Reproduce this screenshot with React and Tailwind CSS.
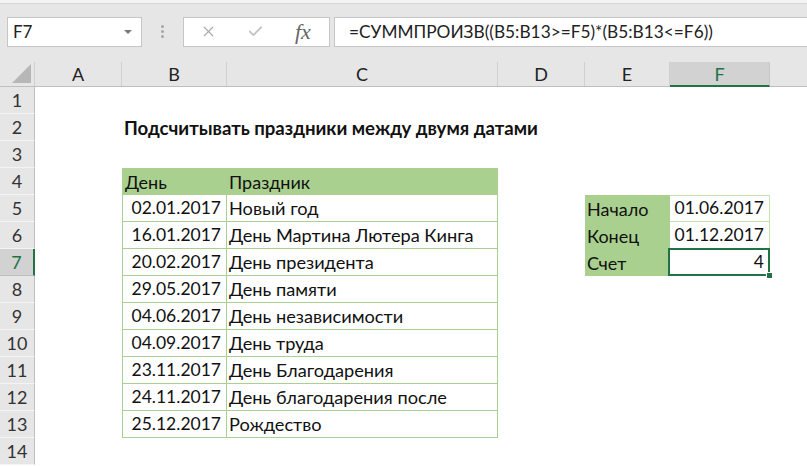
import { X, Check } from 'lucide-react';

const cols = [
  { key: 'A', w: 'w-[87px]' },
  { key: 'B', w: 'w-[105px]' },
  { key: 'C', w: 'w-[271px]' },
  { key: 'D', w: 'w-[87px]' },
  { key: 'E', w: 'w-[85px]' },
  { key: 'F', w: 'w-[100px]' },
  { key: 'G', w: 'flex-1' },
];

const holidays = [
  ['02.01.2017', 'Новый год'],
  ['16.01.2017', 'День Мартина Лютера Кинга'],
  ['20.02.2017', 'День президента'],
  ['29.05.2017', 'День памяти'],
  ['04.06.2017', 'День независимости'],
  ['04.09.2017', 'День труда'],
  ['23.11.2017', 'День Благодарения'],
  ['24.11.2017', 'День благодарения после'],
  ['25.12.2017', 'Рождество'],
];

const summary = {
  5: ['Начало', '01.06.2017'],
  6: ['Конец', '01.12.2017'],
  7: ['Счет', '4'],
};

function cellFor(row, col) {
  // returns { text, cls, align, selected }
  if (row === 2 && col === 'B') return { text: 'Подсчитывать праздники между двумя датами', cls: 'font-bold text-[18.6px]', align: 'left' };
  if (row === 4 && col === 'B') return { text: 'День', cls: 'text-[18px] bg-[#a9d08e] border-t border-l border-[#a9d08e]', align: 'left' };
  if (row === 4 && col === 'C') return { text: 'Праздник', cls: 'text-[18px] bg-[#a9d08e] border-t border-r border-[#a9d08e]', align: 'left' };
  if (row >= 5 && row <= 13) {
    const h = holidays[row - 5];
    if (col === 'B') return { text: h[0], cls: 'text-[17.5px] border-l border-r border-b border-[#a9d08e]', align: 'right' };
    if (col === 'C') return { text: h[1], cls: 'text-[18.2px] border-r border-b border-[#a9d08e]', align: 'left' };
  }
  if (summary[row]) {
    const s = summary[row];
    if (col === 'E') return { text: s[0], cls: 'text-[18px] bg-[#a9d08e]', align: 'left' };
    if (col === 'F')
      return {
        text: s[1],
        cls: 'text-[17.5px] ' + (row === 5 ? 'border-t ' : '') + 'border-r border-b border-[#c6e0b4]',
        align: 'right',
        selected: row === 7,
      };
  }
  return { text: '', cls: 'text-[17.5px]', align: 'left' };
}

function FormulaBar() {
  return (
    <div className="bg-[#e6e6e6]">
      <div className="h-[4px] bg-[#f3f3f3] border-b border-[#d6d6d6]" />
      <div className="flex items-center h-[58px] pb-[3px]">
        <div className="ml-[7px] w-[135px] h-[30px] bg-white border border-[#c6c6c6] flex items-center justify-between pl-[5px] pr-[9px]">
          <span className="text-[17px] text-[#222]">F7</span>
          <span className="w-0 h-0 border-l-[4px] border-r-[4px] border-t-[4px] border-l-transparent border-r-transparent border-t-[#777]" />
        </div>
        <div className="w-[41px] flex flex-col items-center gap-[2px]">
          <span className="w-[3px] h-[3px] rounded-full bg-[#a6a6a6]" />
          <span className="w-[3px] h-[3px] rounded-full bg-[#a6a6a6]" />
          <span className="w-[3px] h-[3px] rounded-full bg-[#a6a6a6]" />
        </div>
        <div className="w-[147px] h-[30px] bg-white border border-[#c6c6c6] flex items-center">
          <X size={17} strokeWidth={1.5} className="ml-[16px] text-[#a8a8a8]" />
          <Check size={17} strokeWidth={2.5} className="ml-[30px] text-[#c4c4c4]" />
          <span className="ml-[31px] text-[22px] italic text-[#666] font-['Liberation_Serif',serif] leading-none">fx</span>
        </div>
        <div className="ml-[4px] flex-1 h-[30px] bg-white border border-r-0 border-[#c6c6c6] flex items-center pl-[14px]">
          <span className="text-[17.3px] text-[#222]">=СУММПРОИЗВ((B5:B13&gt;=F5)*(B5:B13&lt;=F6))</span>
        </div>
      </div>
    </div>
  );
}

function ColumnHeaders() {
  return (
    <div className="flex h-[25px] bg-[#e6e6e6] border-b border-[#bfbfbf]">
      <div className="w-[35px] relative border-r border-[#d0d0d0]">
        <div className="absolute right-[3px] bottom-[3px] w-0 h-0 border-b-[19px] border-l-[19px] border-l-transparent border-b-[#b7b7b7]" />
      </div>
      {cols.map((c) => {
        const sel = c.key === 'F';
        return (
          <div
            key={c.key}
            className={
              c.w +
              ' flex items-center justify-center text-[18px] leading-none border-r ' +
              (sel
                ? 'bg-[#d2d2d2] text-[#217346] border-[#c8c8c8] border-b-2 border-b-[#217346] -mb-[1px]'
                : 'text-[#222] border-[#d0d0d0]') +
              (c.key === 'G' ? ' border-r-0' : '')
            }
          >
            {c.key === 'G' ? '' : c.key}
          </div>
        );
      })}
    </div>
  );
}

function Row({ n }) {
  const sel = n === 7;
  return (
    <div className="flex h-[27px]">
      <div
        className={
          'w-[35px] shrink-0 flex items-center justify-center text-[18px] border-b ' +
          (sel
            ? 'bg-[#d2d2d2] text-[#217346] border-[#bdbdbd] border-r-2 border-r-[#217346]'
            : 'bg-[#e6e6e6] text-[#333] border-[#f4f4f4] border-r border-r-[#bfbfbf]')
        }
      >
        {n}
      </div>
      {cols.map((c) => {
        const cell = cellFor(n, c.key);
        return (
          <div
            key={c.key}
            className={
              c.w +
              ' shrink-0 relative flex items-end pb-[2px] leading-[22px] text-[#111] whitespace-nowrap ' +
              (cell.align === 'right' ? 'justify-end pr-[5px] ' : 'pl-[2px] ') +
              cell.cls
            }
          >
            <span>{cell.text}</span>
            {cell.selected && (
              <>
                <div className="absolute -left-[2px] -top-[1px] -right-[1px] -bottom-[1px] border-2 border-[#217346]" />
                <div className="absolute -right-[4px] -bottom-[4px] w-[7px] h-[7px] bg-[#217346] border border-white" />
              </>
            )}
          </div>
        );
      })}
    </div>
  );
}

export default function App() {
  const rows = Array.from({ length: 14 }, (_, i) => i + 1);
  return (
    <div className="w-[807px] h-[466px] overflow-hidden bg-white font-['Lato','Noto_Sans',sans-serif]">
      <FormulaBar />
      <ColumnHeaders />
      {rows.map((n) => (
        <Row key={n} n={n} />
      ))}
    </div>
  );
}
